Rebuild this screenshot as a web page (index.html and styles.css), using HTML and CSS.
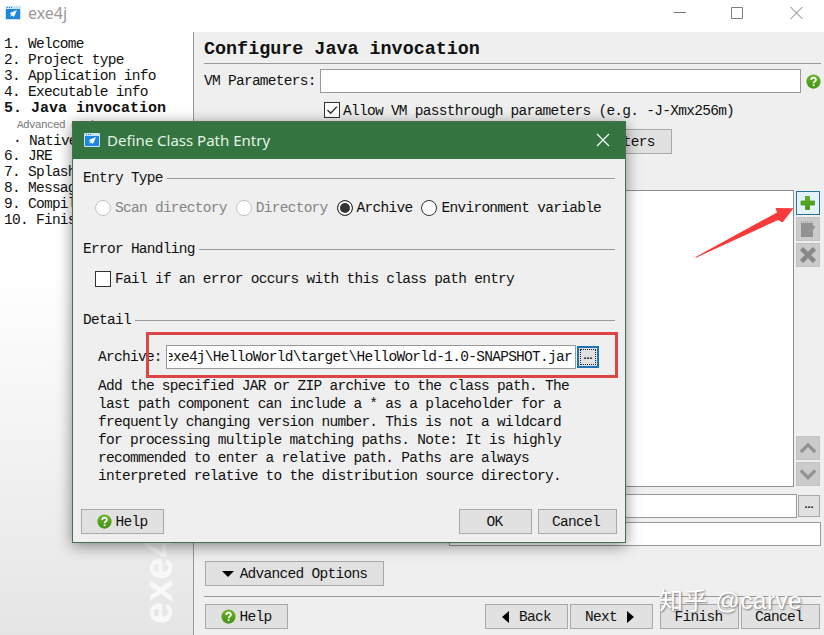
FILE: index.html
```
<!DOCTYPE html>
<html lang="en">
<head>
    <meta charset="UTF-8">
    <meta name="viewport" content="width=device-width, initial-scale=1.0">
    <title>exe4j</title>
    <link rel="stylesheet" href="styles.css">
</head>
<body>
    <!-- shared icons -->
    <svg class="defs" width="0" height="0">
        <defs>
            <linearGradient id="green" x1="0" y1="0" x2="0" y2="1">
                <stop offset="0" stop-color="#6fb52c"/>
                <stop offset="1" stop-color="#3f9112"/>
            </linearGradient>
            <symbol id="icon-app" viewBox="0 0 16 14">
                <rect x="0" y="0" width="16" height="14" rx="1" fill="#c9e2f5"/>
                <path d="M2 1.5h1M4 1.5h1M6 1.5h1" stroke="#2a7fc9"/>
                <rect x="1" y="3" width="14" height="10" fill="#1f86e0"/>
                <path d="M12 4L6 6.5L5 8.3L6.6 8.5L5 10.8L7.5 9.4L8.6 11L9.6 9.5Z" fill="#fff"/>
            </symbol>
            <symbol id="icon-help" viewBox="0 0 16 16">
                <circle cx="8" cy="8" r="7.6" fill="url(#green)"/>
                <path d="M5.6 6.3C5.6 3.2 10.6 3.2 10.6 6.1C10.6 7.9 8.1 7.9 8.1 9.8" fill="none" stroke="#fff" stroke-width="1.9"/>
                <rect x="7.1" y="11" width="2" height="2" fill="#fff"/>
            </symbol>
        </defs>
    </svg>

    <div class="window">
        <div class="titlebar">
            <svg class="app-icon"><use href="#icon-app"/></svg>
            <span class="title">exe4j</span>
            <svg class="controls" width="132" height="16" viewBox="0 0 132 16">
                <path d="M0.500 7.500H13M58.500 2.500H69.500V13.500H58.500ZM117.500 2L129.500 14M129.500 2L117.500 14" fill="none" stroke="#7d7d7d"/>
            </svg>
        </div>

        <div class="content">
            <div class="sidebar">
                <div class="step">1. Welcome</div>
                <div class="step">2. Project type</div>
                <div class="step">3. Application info</div>
                <div class="step">4. Executable info</div>
                <div class="step current">5. Java invocation</div>
                <div class="step caption">Advanced options</div>
                <div class="step sub">· Native libraries</div>
                <div class="step">6. JRE</div>
                <div class="step">7. Splash screen</div>
                <div class="step">8. Messages</div>
                <div class="step">9. Compile</div>
                <div class="step">10. Finished</div>
                <div class="brand">exe4j</div>
            </div>

            <div class="main">
                <h1>Configure Java invocation</h1>
                <div class="row params">
                    <label>VM Parameters:</label>
                    <div class="input"></div>
                    <svg class="help-icon"><use href="#icon-help"/></svg>
                </div>
                <div class="row passthrough">
                    <svg class="check" width="17" height="17" viewBox="0 0 17 17">
                        <rect x="0.500" y="0.500" width="15" height="15" fill="#fff" stroke="#333"/>
                        <path d="M3.500 8L6.700 11.300L12.800 4.800" fill="none" stroke="#333" stroke-width="1.400"/>
                    </svg>
                    <span>Allow VM passthrough parameters (e.g. -J-Xmx256m)</span>
                </div>
                <div class="button specific">Version-Specific VM Parameters</div>

                <div class="classpath">
                    <div class="list"></div>
                    <div class="tools">
                        <div class="tool add">
                            <svg width="16" height="16" viewBox="0 0 16 16"><path d="M5.500 1.500h4v4.500h5v4h-5v4.500h-4v-4.500h-4.500v-4h4.500z" fill="url(#green)" stroke="#3f9a12" stroke-width="0.800"/></svg>
                        </div>
                        <div class="tool">
                            <svg width="16" height="16" viewBox="0 0 16 16"><path d="M1 2H13V4.500L15.500 6L13 9V16H1Z" fill="#929292"/><path d="M1 1H13" stroke="#929292" stroke-dasharray="1 1"/><path d="M9 11L14 6" stroke="#a0a0a0"/></svg>
                        </div>
                        <div class="tool">
                            <svg width="16" height="16" viewBox="0 0 16 16"><path d="M1.500 1.500L14.500 14.500M14.500 1.500L1.500 14.500" stroke="#898989" stroke-width="4.600"/></svg>
                        </div>
                        <div class="tool up">
                            <svg width="16" height="16" viewBox="0 0 16 16"><path d="M0.800 12L8 4.800L15.200 12" fill="none" stroke="#929292" stroke-width="3.200"/></svg>
                        </div>
                        <div class="tool">
                            <svg width="16" height="16" viewBox="0 0 16 16"><path d="M0.800 4.500L8 11.700L15.200 4.500" fill="none" stroke="#929292" stroke-width="3.200"/></svg>
                        </div>
                    </div>
                </div>

                <div class="row main-class">
                    <div class="input"></div>
                    <div class="browse">...</div>
                </div>
                <div class="input arguments"></div>

                <div class="button advanced">
                    <svg width="12" height="6" viewBox="0 0 12 6"><path d="M0 0H12L6 6Z"/></svg>
                    <span>Advanced Options</span>
                </div>

                <div class="footer">
                    <div class="button help"><svg class="help-icon"><use href="#icon-help"/></svg>Help</div>
                    <div class="button back"><svg width="7" height="12" viewBox="0 0 7 12"><path d="M7 0V12L0 6Z"/></svg>Back</div>
                    <div class="button next">Next<svg width="7" height="12" viewBox="0 0 7 12"><path d="M0 0V12L7 6Z"/></svg></div>
                    <div class="button finish">Finish</div>
                    <div class="button cancel">Cancel</div>
                </div>
            </div>
        </div>

        <div class="dialog">
            <div class="dialog-title">
                <svg class="app-icon"><use href="#icon-app"/></svg>
                <span class="title">Define Class Path Entry</span>
                <svg class="close" width="14" height="14" viewBox="0 0 14 14"><path d="M1 1L13 13M13 1L1 13" stroke="#fff" stroke-width="1.200"/></svg>
            </div>
            <div class="dialog-body">
                <div class="group">Entry Type</div>
                <div class="radios">
                    <label class="disabled"><i class="radio"></i>Scan directory</label>
                    <label class="disabled"><i class="radio"></i>Directory</label>
                    <label><i class="radio on"></i>Archive</label>
                    <label><i class="radio"></i>Environment variable</label>
                </div>
                <div class="group">Error Handling</div>
                <div class="fail"><i class="box"></i>Fail if an error occurs with this class path entry</div>
                <div class="group">Detail</div>
                <div class="archive">
                    <label>Archive:</label>
                    <div class="input"><div class="clip"><span>exe4j\HelloWorld\target\HelloWorld-1.0-SNAPSHOT.jar</span></div></div>
                    <div class="browse focused"><span>...</span></div>
                </div>
                <p class="hint">
                    Add the specified JAR or ZIP archive to the class path. The<br>
                    last path component can include a * as a placeholder for a<br>
                    frequently changing version number. This is not a wildcard<br>
                    for processing multiple matching paths. Note: It is highly<br>
                    recommended to enter a relative path. Paths are always<br>
                    interpreted relative to the distribution source directory.
                </p>
                <div class="dialog-buttons">
                    <div class="button help"><svg class="help-icon"><use href="#icon-help"/></svg>Help</div>
                    <div class="button ok">OK</div>
                    <div class="button cancel">Cancel</div>
                </div>
            </div>
        </div>

        <div class="highlight"></div>
        <svg class="arrow" width="100" height="54" viewBox="0 0 100 54">
            <path d="M0.500 53L82 8.500L80.500 4L98.500 4.300L87.500 18.500L83 16L1 53.700Z" fill="#f83a3a"/>
        </svg>
        <div class="watermark">知乎 @carve</div>
    </div>
</body>
</html>
```
FILE: styles.css
```
* {
    box-sizing: border-box;
}

body {
    margin: 0;
    font-family: "Liberation Mono", monospace;
    font-size: 14.5px;
    letter-spacing: -0.72px;
    line-height: 16px;
    color: #111;
    white-space: nowrap;
}

svg {
    display: block;
    flex: none;
}

.defs {
    position: absolute;
}

.window {
    position: relative;
    width: 824px;
    height: 635px;
    overflow: hidden;
    background-color: #efefef;
}

.titlebar {
    display: flex;
    align-items: center;
    height: 32px;
    padding: 0 19px 6px 5px;
    background-color: white;
}

.title {
    font-family: "Noto Sans", sans-serif;
    font-size: 16px;
    letter-spacing: 0;
    line-height: 20px;
    color: #999;
    margin-left: 7px;
}

.app-icon {
    width: 16px;
    height: 14px;
}

.controls {
    margin-left: auto;
}

.content {
    display: flex;
    height: 603px;
}

.sidebar {
    display: flex;
    flex-direction: column;
    width: 194px;
    padding: 4px 0 11px 4px;
    border-right: 1px solid #999;
    background: linear-gradient(white 40%, #e5e5e5);
}

.step {
    height: 16px;
}

.current {
    font-size: 15px;
    font-weight: bold;
    letter-spacing: 0;
    line-height: 18px;
}

.caption {
    padding-left: 13px;
    font-size: 11px;
    letter-spacing: -0.6px;
    line-height: 18px;
    color: #777;
}

.sub {
    padding-left: 9px;
    line-height: 18px;
}

.brand {
    align-self: flex-end;
    margin: auto 17px 0 0;
    font: bold 40px/36px "Liberation Sans", sans-serif;
    letter-spacing: 0;
    color: #f8f8f8;
    writing-mode: vertical-rl;
    transform: rotate(180deg);
}

.main {
    flex: 1;
    display: flex;
    flex-direction: column;
    padding: 0 3px 6px 10px;
}

h1 {
    height: 32px;
    margin: 0;
    padding-top: 8px;
    font-size: 18.4px;
    letter-spacing: 0;
    line-height: 20px;
    border-bottom: 1px solid #999;
}

.row {
    display: flex;
    align-items: center;
}

.input {
    height: 24px;
    background-color: white;
    border: 1px solid #999;
}

.params {
    margin-top: 5px;
}

.params label {
    width: 116px;
}

.params .input {
    width: 481px;
    margin-right: 5px;
}

.help-icon {
    width: 15px;
    height: 15px;
}

.passthrough {
    height: 17px;
    margin: 9px 0 0 120px;
    gap: 2px;
}

.button {
    display: flex;
    align-items: center;
    justify-content: center;
    height: 25px;
    background-color: #e1e1e1;
    border: 1px solid #a8a8a8;
}

.specific {
    width: 274px;
    margin: 10px 0 0 194px;
}

.classpath {
    display: flex;
    gap: 2px;
    height: 297px;
    margin-top: 36px;
}

.list {
    width: 590px;
    background-color: white;
    border: 1px solid #8f8f8f;
}

.tools {
    display: flex;
    flex-direction: column;
    gap: 2px;
    padding: 1px 0;
}

.tool {
    display: flex;
    align-items: center;
    justify-content: center;
    width: 24px;
    height: 24px;
    background-color: #cbcbcb;
    border: 1px solid #c2c2c2;
}

.add {
    background-color: #e5f1fb;
    border-color: #22739c;
}

.up {
    margin-top: auto;
}

.main-class {
    margin-top: 7px;
}

.main-class .input {
    width: 593px;
    margin-right: 1px;
}

.browse {
    width: 22px;
    height: 22px;
    font: bold 11px/16px "Liberation Sans", sans-serif;
    letter-spacing: 0;
    text-align: center;
    background-color: #e1e1e1;
    border: 1px solid #a8a8a8;
}

.arguments {
    margin: 4px 0 0 245px;
}

.advanced {
    gap: 6px;
    width: 179px;
    margin: 15px 0 0 1px;
}

.footer {
    display: flex;
    height: 33px;
    margin-top: auto;
    padding: 7px 1px 0;
    border-top: 1px solid #999;
}

.help {
    gap: 4px;
    width: 83px;
    padding-right: 1px;
}

.back {
    gap: 10px;
    width: 83px;
    margin-left: auto;
}

.next {
    gap: 10px;
    width: 83px;
    margin-left: 2px;
    padding-right: 4px;
}

.finish {
    width: 79px;
    margin-left: 7px;
    padding-right: 2px;
}

.cancel {
    width: 79px;
    margin-left: 2px;
    padding-right: 3px;
}

/* modal over the main window */
.dialog {
    position: absolute;
    left: 72px;
    top: 121px;
    width: 554px;
    height: 422px;
    display: flex;
    flex-direction: column;
    background-color: #efefef;
    border: 1px solid #48704f;
    box-shadow: 0 3px 14px rgba(0, 0, 0, 0.45);
}

.dialog-title {
    display: flex;
    align-items: center;
    height: 37px;
    padding: 0 15px 2px 11px;
    background-color: #337441;
}

.dialog-title .title {
    margin-left: 7px;
    font-size: 15px;
    color: #e4f5e6;
}

.close {
    margin-left: auto;
}

.dialog-body {
    flex: 1;
    display: flex;
    flex-direction: column;
    padding: 10px 8px 8px;
}

.group {
    display: flex;
    align-items: center;
    gap: 4px;
    height: 18px;
    padding: 0 2px;
}

.group::after {
    content: "";
    flex: 1;
    height: 1px;
    background-color: #999;
}

.radios {
    display: flex;
    gap: 9px;
    height: 18px;
    margin: 12px 0 23px 14px;
}

.radios label, .fail {
    display: flex;
    align-items: center;
    gap: 4px;
}

.radio {
    width: 16px;
    height: 16px;
    background-color: white;
    border: 1px solid #333;
    border-radius: 50%;
}

.radio.on {
    background-color: #333;
    box-shadow: inset 0 0 0 2px white;
}

.disabled {
    color: #858585;
}

.disabled .radio {
    border-color: #c4c4c4;
}

.box {
    width: 16px;
    height: 16px;
    background-color: white;
    border: 1px solid #333;
}

.fail {
    height: 18px;
    margin: 12px 0 23px 14px;
}

.archive {
    display: flex;
    align-items: center;
    height: 24px;
    margin: 16px 0 0 17px;
}

.archive label {
    width: 68px;
}

.archive .input {
    width: 410px;
    margin-right: 1px;
    padding: 3px 3px 0 2px;
}

.clip {
    display: flex;
    justify-content: flex-end;
    overflow: hidden;
}

.focused {
    padding: 1px;
    line-height: 10px;
    border: 2px solid #1b74b5;
}

.focused span {
    display: block;
    height: 16px;
    border: 1px dotted #222;
}

.hint {
    margin: 8px 0 0 17px;
    line-height: 18px;
}

.dialog-buttons {
    display: flex;
    margin-top: auto;
}

.ok {
    width: 73px;
    margin-left: auto;
    padding-right: 2px;
}

.dialog-buttons .cancel {
    margin-left: 6px;
}

/* annotations */
.highlight {
    position: absolute;
    left: 146px;
    top: 332px;
    width: 472px;
    height: 46px;
    border: 3px solid #dc4545;
}

.arrow {
    position: absolute;
    left: 695px;
    top: 204px;
}

.watermark {
    position: absolute;
    left: 659px;
    top: 586px;
    font: 24px/30px "Liberation Sans", "Noto Sans CJK SC", sans-serif;
    letter-spacing: 0.6px;
    color: #fff;
    text-shadow: 1px 1px 2px #777;
}
```
